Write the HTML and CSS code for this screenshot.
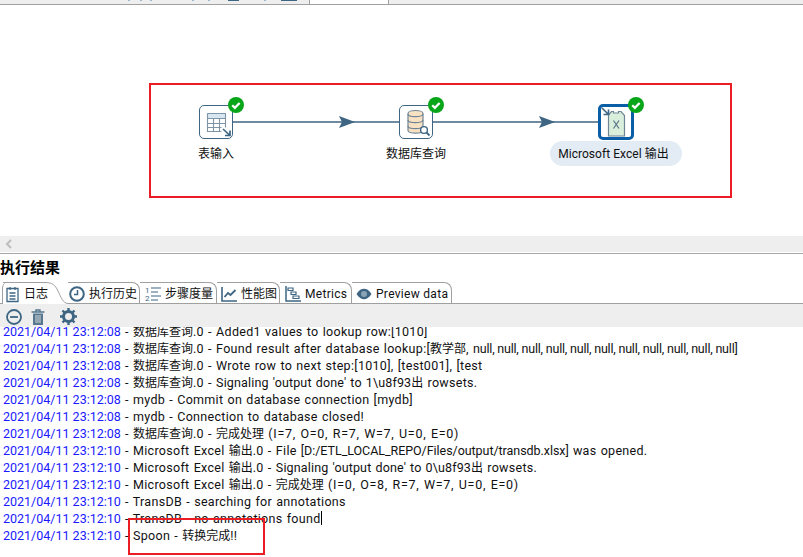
FILE: index.html
```html
<!DOCTYPE html>
<html lang="zh">
<head>
<meta charset="utf-8">
<title>执行结果</title>
<link rel="stylesheet" href="styles.css">
</head>
<body>
<header class="topbar">
  <svg class="cut-icons" width="300" height="1" viewBox="0 0 300 1">
    <path d="M128 0h2v1h-2zM140 0h2v1h-2zM150 0h2v1h-2zM192 0h2v1h-2zM208 0h2v1h-2zM264 0h2v1h-2z" fill="#9db8cc"/>
    <path d="M228 0h11v1h-11zM281 0h16v1h-16z" fill="#3e6582"/>
  </svg>
  <div class="top-tab"></div>
</header>
<main class="canvas">
  <svg class="hops" width="803" height="231" viewBox="0 0 803 231">
    <path d="M232 117H600" stroke="#3e6582" stroke-width="1.3" fill="none"/>
    <path d="M339 111l16 6-16 6 3-6z" fill="#3e6582"/>
    <path d="M539 111l16 6-16 6 3-6z" fill="#3e6582"/>
  </svg>
  <div class="node node-a">
    <div class="icon-box">
      <svg width="32" height="32" viewBox="0 0 32 32">
        <rect x="7" y="7" width="19" height="5" fill="#d6e6f2"/>
        <path d="M7.500 7.500h18v14M7.500 7.500v18h14M7.500 12.500h18M7.500 17.500h18M7.500 21.500h14M13.500 12.500v13M19.500 12.500v13" fill="none" stroke="#7f95a6" stroke-width="1.100"/>
        <path d="M23 23l7 6.500M30 24.500v5h-5" fill="none" stroke="#3e6582" stroke-width="1.700"/>
      </svg>
    </div>
    <svg class="check" width="16" height="16" viewBox="0 0 17 17"><circle cx="8.5" cy="8.5" r="8.5" fill="#0aa61a"/><path d="M4.5 8.700l2.800 2.800 5-5.200" fill="none" stroke="#fff" stroke-width="2.400"/></svg>
    <span class="label">表输入</span>
  </div>
  <div class="node node-b">
    <div class="icon-box">
      <svg width="32" height="32" viewBox="0 0 32 32">
        <path d="M8 7.500c0-4 15-4 15 0v17c0 3.500-15 3.500-15 0z" fill="#f8e1c2" stroke="#6f8596" stroke-width="1.200"/>
        <path d="M8 8c0 3.500 15 3.500 15 0M8 14c0 3.500 15 3.500 15 0M8 20c0 3.500 15 3.500 15 0" fill="none" stroke="#6f8596" stroke-width="1.200"/>
        <circle cx="24" cy="24" r="3.400" fill="#fff" stroke="#3e6582" stroke-width="1.400"/>
        <path d="M26.500 26.500l3 3" stroke="#3e6582" stroke-width="1.800"/>
      </svg>
    </div>
    <svg class="check" width="16" height="16" viewBox="0 0 17 17"><circle cx="8.5" cy="8.5" r="8.5" fill="#0aa61a"/><path d="M4.5 8.700l2.800 2.800 5-5.200" fill="none" stroke="#fff" stroke-width="2.400"/></svg>
    <span class="label">数据库查询</span>
  </div>
  <div class="node node-c">
    <div class="icon-box selected">
      <svg width="30" height="30" viewBox="0 0 30 30">
        <path d="M7.500 8l3-3.500h2v1.500h5v-1.500h2.500l3.500 4v20.500H7.500z" fill="#d9efdc" stroke="#6f8596" stroke-width="1.200"/>
        <path d="M12.500 13.500l5.500 8M18 13.500l-5.500 8" stroke="#4f6b80" stroke-width="1.100"/>
        <path d="M1 1l6 6M7.500 2.500v5h-5" fill="none" stroke="#3e6582" stroke-width="1.600"/>
      </svg>
    </div>
    <svg class="check" width="16" height="16" viewBox="0 0 17 17"><circle cx="8.5" cy="8.5" r="8.5" fill="#0aa61a"/><path d="M4.5 8.700l2.800 2.800 5-5.200" fill="none" stroke="#fff" stroke-width="2.400"/></svg>
    <span class="label pill">Microsoft Excel 输出</span>
  </div>
  <div class="red-box diagram-box"></div>
</main>
<div class="hscroll">
  <svg width="10" height="10" viewBox="0 0 10 10"><path d="M7 1L3 5l4 4" fill="none" stroke="#bdbdbd" stroke-width="2"/></svg>
</div>
<section class="results">
  <h2 class="title">执行结果</h2>
  <nav class="tabs">
    <div class="tab tab-active">
      <svg width="13" height="17" viewBox="0 0 13 17"><path d="M1 2.500h11v13H1zM4 1v3M9 1v3M3.500 7h6M3.500 10h6M3.500 13h6" fill="none" stroke="#3e6582" stroke-width="1.300"/></svg>
      <span>日志</span>
      <svg class="tab-curve" width="24" height="22" viewBox="0 0 24 22"><path d="M0 .5C9 .5 11 3 14 9s5 12.500 10 12.500" fill="none" stroke="#a0a0a0"/></svg>
    </div>
    <div class="tab tab-hist">
      <svg width="16" height="16" viewBox="0 0 16 16"><circle cx="8" cy="8" r="6.800" fill="none" stroke="#3e6582" stroke-width="2"/><path d="M8.500 4v4.500H5" fill="none" stroke="#3e6582" stroke-width="1.500"/></svg>
      <span>执行历史</span>
    </div>
    <div class="tab tab-step">
      <svg width="16" height="16" viewBox="0 0 16 16"><text x="0" y="7" class="mini">1</text><text x="0" y="15" class="mini">2</text><path d="M6 2h10M6 6h7M6 10h10M6 14h7" stroke="#3e6582" stroke-width="1.200"/></svg>
      <span>步骤度量</span>
    </div>
    <div class="tab tab-perf">
      <svg width="16" height="16" viewBox="0 0 16 16"><path d="M1 1v14h15" fill="none" stroke="#3e6582" stroke-width="1.600"/><path d="M3.500 11l3.500-4 2.500 2 5-5" fill="none" stroke="#3e6582" stroke-width="1.800"/></svg>
      <span>性能图</span>
    </div>
    <div class="tab tab-metrics">
      <svg width="16" height="16" viewBox="0 0 16 16"><path d="M1 0v15h15" fill="none" stroke="#3e6582" stroke-width="1.500"/><path d="M3 2h5v2.500H3zM6 6h5v2.500H6zM8 10h6v2.500H8z" fill="none" stroke="#3e6582" stroke-width="1.200"/></svg>
      <span>Metrics</span>
    </div>
    <div class="tab tab-preview">
      <svg width="16" height="12" viewBox="0 0 16 12"><path d="M0.500 6C3 2 5.500 0.800 8 0.800S13 2 15.500 6C13 10 10.500 11.200 8 11.200S3 10 0.500 6z" fill="#3e6582"/><circle cx="8" cy="6" r="3" fill="#8aa3b5"/></svg>
      <span>Preview data</span>
    </div>
  </nav>
  <div class="toolbar">
    <svg width="16" height="16" viewBox="0 0 16 16"><circle cx="8" cy="8" r="7" fill="none" stroke="#3e6582" stroke-width="1.800"/><path d="M4 8h8" stroke="#3e6582" stroke-width="1.800"/></svg>
    <svg width="14" height="16" viewBox="0 0 14 16"><path d="M0.500 3h13M5 3V1h4v2" fill="none" stroke="#56778e" stroke-width="1.400"/><path d="M2 4.500h10V16H2z" fill="#56778e"/><path d="M5 6v8M7 6v8M9 6v8" stroke="#eee" stroke-width="0.800"/></svg>
    <svg class="gear" width="17" height="17" viewBox="0 0 17 17"><circle cx="8.500" cy="8.500" r="5" fill="none" stroke="#3e6582" stroke-width="3"/><path d="M8.500 0v3M8.500 14v3M0 8.500h3M14 8.500h3M2.500 2.500l2 2M12.500 12.500l2 2M2.500 14.500l2-2M12.500 4.500l2-2" stroke="#3e6582" stroke-width="2.400"/></svg>
  </div>
  <div class="log">
    <div class="row first"><time>2021/04/11 23:12:08</time> - <span class="zh">数据库查询</span>.0 - Added1 values to lookup row:[1010]</div>
    <div class="row"><time>2021/04/11 23:12:08</time> - <span class="zh">数据库查询</span>.0 - Found result after database lookup:[<span class="zh">教学部</span>, <span class="nulls">null, null, null, null, null, null, null, null, null, null, null</span>]</div>
    <div class="row"><time>2021/04/11 23:12:08</time> - <span class="zh">数据库查询</span>.0 - Wrote row to next step:[1010], [test001], [test</div>
    <div class="row"><time>2021/04/11 23:12:08</time> - <span class="zh">数据库查询</span>.0 - <span class="signal">Signaling 'output done' to 1\u8f93</span><span class="zh">出</span> rowsets.</div>
    <div class="row"><time>2021/04/11 23:12:08</time> - mydb - Commit on database connection [mydb]</div>
    <div class="row"><time>2021/04/11 23:12:08</time> - mydb - Connection to database closed!</div>
    <div class="row"><time>2021/04/11 23:12:08</time> - <span class="zh">数据库查询</span>.0 - <span class="zh">完成处理</span> <span class="stats">(I=7, O=0, R=7, W=7, U=0, E=0)</span></div>
    <div class="row"><time>2021/04/11 23:12:10</time> - Microsoft Excel <span class="zh">输出</span>.0 - File <span class="path">[D:/ETL_LOCAL_REPO/Files/output/transdb.xlsx]</span> was opened.</div>
    <div class="row"><time>2021/04/11 23:12:10</time> - Microsoft Excel <span class="zh">输出</span>.0 - <span class="signal">Signaling 'output done' to 0\u8f93</span><span class="zh">出</span> rowsets.</div>
    <div class="row"><time>2021/04/11 23:12:10</time> - Microsoft Excel <span class="zh">输出</span>.0 - <span class="zh">完成处理</span> <span class="stats">(I=0, O=8, R=7, W=7, U=0, E=0)</span></div>
    <div class="row"><time>2021/04/11 23:12:10</time> - TransDB - searching for annotations</div>
    <div class="row"><time>2021/04/11 23:12:10</time> - TransDB - no annotations found<i class="caret"></i></div>
    <div class="row"><time>2021/04/11 23:12:10</time> - Spoon - <span class="zh">转换完成</span>!!</div>
    <div class="red-box done-box"></div>
  </div>
</section>
</body>
</html>
```
FILE: styles.css
```css
* { box-sizing: border-box; }
html, body { margin: 0; padding: 0; }
body {
  width: 803px;
  height: 557px;
  overflow: hidden;
  background: #fff;
  color: #111;
  font: 12.5px/17px Roboto, "Noto Sans CJK SC", sans-serif;
}
.topbar {
  position: relative;
  height: 5px;
  background: #eeeeee;
  border-bottom: 1px solid #a0a0a0;
  padding-left: 309px;
}
.cut-icons { position: absolute; left: 0; top: 0; }
.top-tab {
  width: 80px;
  height: 4px;
  background: #fff;
  border-left: 1px solid #a0a0a0;
  border-right: 1px solid #a0a0a0;
}
.canvas {
  position: relative;
  height: 231px;
}
.hops { position: absolute; left: 0; top: 0; }
.node { position: absolute; width: 34px; height: 34px; top: 100px; }
.node-a { left: 199px; }
.node-b { left: 399px; }
.node-c { left: 599px; }
.icon-box {
  width: 34px;
  height: 34px;
  background: #fff;
  border: 1px solid #3e6582;
  border-radius: 5px;
  display: flex;
  align-items: center;
  justify-content: center;
}
.icon-box.selected {
  width: 36px;
  height: 36px;
  margin: -1px;
  border: 3px solid #0a5ea6;
}
.check { position: absolute; left: 29px; top: -8px; }
.label {
  position: absolute;
  top: 41px;
  left: 50%;
  transform: translateX(-50%);
  white-space: nowrap;
  font-size: 12px;
  line-height: 17px;
}
.pill {
  top: 36px;
  width: 132px;
  height: 25px;
  padding-right: 5px;
  line-height: 26px;
  text-align: center;
  letter-spacing: .05px;
  background: #e3ebf4;
  border-radius: 13px;
}
.red-box { position: absolute; border: 2px solid #ec1c24; }
.diagram-box { left: 149px; top: 78px; width: 583px; height: 115px; }
.hscroll {
  height: 16px;
  background: #eeeeee;
  display: flex;
  align-items: center;
  padding-left: 4px;
  margin-bottom: 1px;
}
.results { border-top: 1px solid #a6a6a6; }
.title {
  margin: 0;
  height: 28px;
  font-size: 15px;
  font-weight: 700;
  line-height: 28px;
  color: #000;
}
.tabs {
  display: flex;
  height: 22px;
  padding-left: 2px;
  align-items: stretch;
  border-bottom: 1px solid #a0a0a0;
  font-size: 12px;
}
.tab {
  display: flex;
  align-items: center;
  gap: 4px;
  padding-left: 4px;
  padding-top: 2px;
  height: 21px;
  border: 1px solid #a0a0a0;
  border-left: 0;
  border-bottom: 0;
  border-radius: 0 8px 0 0;
  background: #fff;
  white-space: nowrap;
}
.tab-active {
  position: relative;
  width: 66px;
  height: 22px;
  padding-left: 3px;
  gap: 5px;
  border-left: 1px solid #a0a0a0;
  border-right: 0;
  border-radius: 6px 0 0 0;
  border-top: 0;
}
.tab-curve { position: absolute; right: 0; top: 0; }
.tab-active::before {
  content: "";
  position: absolute;
  left: 0;
  top: 0;
  width: 43px;
  border-top: 1px solid #a0a0a0;
}
.tab-hist { width: 72px; padding-left: 1px; }
.tab-step { width: 77px; padding-left: 5px; }
.tab-perf { width: 63px; }
.tab-metrics { width: 72px; padding-left: 5px; }
.tab-preview { width: 100px; }
.tab-metrics span, .tab-preview span { letter-spacing: .3px; }
.mini { font-size: 8px; fill: #3e6582; font-family: Roboto, sans-serif; }
.toolbar {
  height: 23px;
  background: #eeeeee;
  display: flex;
  align-items: center;
  gap: 9px;
  padding: 2px 0 0 6px;
}
.gear { margin-left: 6px; }
.log {
  position: relative;
  height: 230px;
  overflow: hidden;
  padding-left: 3px;
}
.row { height: 17px; white-space: nowrap; letter-spacing: .3px; word-spacing: .8px; }
.row.first { margin-top: -4px; }
.zh { font-size: 12px; letter-spacing: 0; }
.nulls { letter-spacing: -.2px; word-spacing: 0; }
.path { letter-spacing: -.05px; word-spacing: 0; }
.stats { letter-spacing: .7px; }
.signal { letter-spacing: .15px; }
time { color: #1a1aff; letter-spacing: 0; word-spacing: 0; }
.caret { display: inline-block; width: 1px; height: 14px; background: #000; vertical-align: -2px; }
.done-box { left: 128px; top: 191px; width: 137px; height: 37px; }
```
